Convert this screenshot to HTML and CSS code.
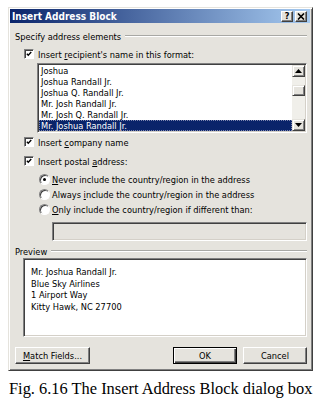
FILE: index.html
```html
<!DOCTYPE html>
<html>
<head>
<meta charset="utf-8">
<link rel="stylesheet" href="styles.css">
</head>
<body>
<div class="dialog">
  <div class="titlebar">
    <span class="title">Insert Address Block</span>
    <div class="tbtns">
      <span class="tbtn help">?</span>
      <span class="tbtn"><svg width="8" height="7" viewBox="0 0 8 7"><path d="M1 0.5 L7 6.5 M7 0.5 L1 6.5" stroke="#000" stroke-width="1.6"/></svg></span>
    </div>
  </div>
  <div class="body">
    <div class="group-head"><span>Specify address elements</span><span class="etch"></span></div>
    <div class="row chk-row first">
      <span class="chk"><svg width="10" height="10" viewBox="0 0 10 10"><path d="M2.3 4.6 L4.1 6.6 L7.8 2.6" fill="none" stroke="#000" stroke-width="1.7"/></svg></span>
      <span>Insert <u>r</u>ecipient's name in this format:</span>
    </div>
    <div class="listbox">
      <div class="items">
        <div class="item">Joshua</div>
        <div class="item">Joshua Randall Jr.</div>
        <div class="item">Joshua Q. Randall Jr.</div>
        <div class="item">Mr. Josh Randall Jr.</div>
        <div class="item">Mr. Josh Q. Randall Jr.</div>
        <div class="item sel">Mr. Joshua Randall Jr.</div>
      </div>
      <div class="scrollbar">
        <div class="sbtn"><svg width="7" height="4" viewBox="0 0 7 4"><path d="M0 4 L3.5 0 L7 4 Z" fill="#000"/></svg></div>
        <div class="track"><div class="thumb"></div></div>
        <div class="sbtn"><svg width="7" height="4" viewBox="0 0 7 4"><path d="M0 0 L3.5 4 L7 0 Z" fill="#000"/></svg></div>
      </div>
    </div>
    <div class="row chk-row company">
      <span class="chk"><svg width="10" height="10" viewBox="0 0 10 10"><path d="M2.3 4.6 L4.1 6.6 L7.8 2.6" fill="none" stroke="#000" stroke-width="1.7"/></svg></span>
      <span>Insert <u>c</u>ompany name</span>
    </div>
    <div class="row chk-row postal">
      <span class="chk"><svg width="10" height="10" viewBox="0 0 10 10"><path d="M2.3 4.6 L4.1 6.6 L7.8 2.6" fill="none" stroke="#000" stroke-width="1.7"/></svg></span>
      <span>Insert postal <u>a</u>ddress:</span>
    </div>
    <div class="row radio-row rad1">
      <span class="radio on"></span>
      <span><u>N</u>ever include the country/region in the address</span>
    </div>
    <div class="row radio-row rad2">
      <span class="radio"></span>
      <span>Always <u>i</u>nclude the country/region in the address</span>
    </div>
    <div class="row radio-row rad3">
      <span class="radio"></span>
      <span><u>O</u>nly include the country/region if different than:</span>
    </div>
    <div class="textbox"></div>
    <div class="group-head preview-head"><span>Preview</span><span class="etch"></span></div>
    <div class="preview">
      <div>Mr. Joshua Randall Jr.</div>
      <div>Blue Sky Airlines</div>
      <div>1 Airport Way</div>
      <div>Kitty Hawk, NC 27700</div>
    </div>
    <div class="buttons">
      <span class="btn match"><u>M</u>atch Fields...</span>
      <span class="btn ok">OK</span>
      <span class="btn cancel">Cancel</span>
    </div>
  </div>
</div>
<div class="caption">Fig. 6.16 The Insert Address Block dialog box</div>
</body>
</html>
```
FILE: styles.css
```css
* { box-sizing: border-box; }
html, body { margin: 0; padding: 0; background: #fff; }
body { width: 321px; height: 400px; overflow: hidden; }

.dialog {
  margin: 7px 0 0 8px;
  width: 305px;
  height: 364px;
  background: #e5e3dd;
  border: 1px solid;
  border-color: #e5e3dd #404040 #404040 #e5e3dd;
  box-shadow: inset 1px 1px #fff, inset -1px -1px #808080;
  padding: 1px;
  display: flex;
  flex-direction: column;
  font-family: "DejaVu Sans Condensed", "Liberation Sans", sans-serif;
  font-size: 9.2px;
  color: #000;
}

.titlebar {
  height: 14px;
  flex-shrink: 0;
  background: linear-gradient(to right, #0a246a, #a6caf0);
  display: flex;
  align-items: center;
  justify-content: space-between;
  padding: 0 3px 0 2px;
  margin-right: 1px;
}
.title { color: #fff; font-weight: bold; font-size: 10px; }
.tbtns { display: flex; gap: 2px; }
.tbtn {
  width: 12px; height: 11px;
  background: #e5e3dd;
  border: 1px solid;
  border-color: #fff #404040 #404040 #fff;
  box-shadow: inset -1px -1px #808080;
  display: flex; align-items: center; justify-content: center;
}
.tbtn.help { font-weight: bold; font-size: 9px; line-height: 9px; }

.body {
  flex: 1;
  display: flex;
  flex-direction: column;
  padding: 0 4px 6px 5px;
}

.group-head { margin-top: 7px; height: 12px; display: flex; align-items: center; gap: 4px; }
.etch { flex: 1; height: 2px; border-top: 1px solid #a8a8a4; border-bottom: 1px solid #fff; }

.row { height: 12px; display: flex; align-items: center; }
.chk-row { padding-left: 9px; gap: 4px; }
.first { margin-top: 6px; }
.company { margin-top: 3px; }
.postal { margin-top: 7px; }

.chk {
  width: 10px; height: 10px;
  background: #fff;
  border: 1px solid;
  border-color: #808080 #fff #fff #808080;
  box-shadow: inset 1px 1px #404040;
  display: flex; align-items: center; justify-content: center;
}
.chk svg { display: block; }

.radio-row { padding-left: 24px; gap: 2px; }
.rad1 { margin-top: 6px; }
.rad2, .rad3 { margin-top: 3px; }
.radio {
  width: 11px; height: 11px;
  border-radius: 50%;
  background: #fff;
  border: 1px solid;
  border-color: #808080 #fff #fff #808080;
  box-shadow: inset 1px 1px #404040;
  display: flex; align-items: center; justify-content: center;
}
.radio.on::after { content: ""; width: 3px; height: 3px; border-radius: 50%; background: #000; }

.listbox, .textbox, .preview {
  border: 1px solid;
  border-color: #808080 #fff #fff #808080;
  box-shadow: inset 1px 1px #404040, inset -1px -1px #d4d0c8;
}
.listbox {
  margin-top: 3px;
  margin-left: 22px;
  height: 70px;
  background: #fff;
  display: flex;
  padding: 1px;
}
.items { flex: 1; }
.item { height: 11px; line-height: 11px; padding-left: 2px; white-space: nowrap; }
.item.sel { background: #0a246a; color: #fff; outline: 1px dotted #7f88b0; outline-offset: -1px; }
.scrollbar { width: 13px; display: flex; flex-direction: column; background: #f0efea; }
.sbtn {
  height: 12px;
  background: #e5e3dd;
  border: 1px solid;
  border-color: #e5e3dd #404040 #404040 #e5e3dd;
  box-shadow: inset 1px 1px #fff, inset -1px -1px #808080;
  display: flex; align-items: center; justify-content: center;
}
.track { flex: 1; }
.thumb {
  margin-top: 8px; height: 11px;
  background: #e5e3dd;
  border: 1px solid;
  border-color: #e5e3dd #404040 #404040 #e5e3dd;
  box-shadow: inset 1px 1px #fff, inset -1px -1px #808080;
}

.textbox { margin-top: 7px; margin-left: 37px; height: 19px; background: #e5e3dd; }
.preview-head { margin-top: 4px; }
.preview {
  margin-top: 1px;
  margin-left: 8px;
  height: 79px;
  background: #fff;
  padding: 7px 6px 0 7px;
  line-height: 11.5px;
}

.buttons { margin-top: 10px; height: 17px; display: flex; }
.btn {
  height: 17px;
  background: #e5e3dd;
  border: 1px solid;
  border-color: #fff #404040 #404040 #fff;
  box-shadow: inset -1px -1px #808080;
  display: flex; align-items: center; justify-content: center;
}
.match { width: 75px; }
.ok { width: 64px; margin-left: auto; border-color: #000; box-shadow: inset 1px 1px #fff, inset -1px -1px #404040, inset -2px -2px #808080; }
.cancel { width: 64px; margin-left: 6px; }

.caption {
  margin-top: 7.5px;
  padding-left: 9px;
  font-family: "Liberation Serif", "Times New Roman", serif;
  font-size: 16.4px;
  line-height: 19px;
  white-space: nowrap;
  color: #000;
}
```
